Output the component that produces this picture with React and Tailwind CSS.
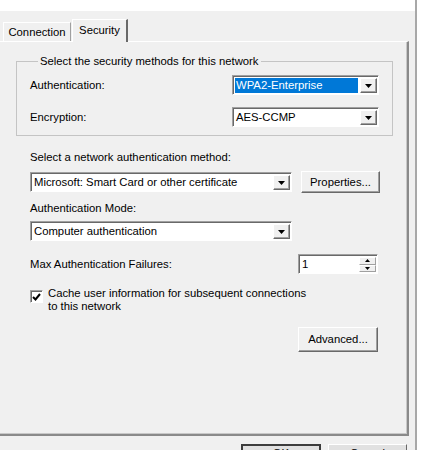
import React from "react";

// classic win32 pieces
function DropArrow() {
  return (
    <div className="w-[17px] self-stretch flex items-center justify-center bg-[#f0f0f0] border border-t-white border-l-white border-b-[#696969] border-r-[#696969] shadow-[inset_-1px_-1px_0_#a0a0a0]">
      <svg width="7" height="4" viewBox="0 0 7 4">
        <path d="M0 0h7L3.5 4z" fill="#000" />
      </svg>
    </div>
  );
}

function Combo({ value, width, selected }) {
  return (
    <div
      className={`${width} h-[20px] flex bg-white border border-t-[#a0a0a0] border-l-[#a0a0a0] border-b-white border-r-white shadow-[inset_1px_1px_0_#696969] pl-[2px] pt-[2px] pr-[1px] pb-[1px]`}
    >
      <div className="flex-1 flex items-center min-w-0">
        {selected ? (
          <span className="h-full flex-1 flex items-center bg-[#0078d7] text-white px-[1px] mr-[2px]">{value}</span>
        ) : (
          <span className="px-[1px]">{value}</span>
        )}
      </div>
      <DropArrow />
    </div>
  );
}

function Button({ children, className = "" }) {
  return (
    <button
      className={`flex items-center justify-center bg-[#f0f0f0] border border-t-white border-l-white border-b-[#696969] border-r-[#696969] shadow-[inset_-1px_-1px_0_#a0a0a0] text-black ${className}`}
    >
      {children}
    </button>
  );
}

export default function App() {
  return (
    <div className="w-[425px] h-[450px] bg-white flex overflow-hidden font-['Liberation_Sans',Arial,sans-serif] text-[11.3px] leading-[13px] text-black">
      <div className="w-[417px] flex flex-col border-r-2 border-[#a8a8a8] overflow-hidden">
        {/* title strip, cut off */}
        <div className="h-[11px] shrink-0 bg-white" />

        <div className="flex-1 shrink-0 bg-[#f0f0f0] flex flex-col">
          {/* tabs */}
          <div className="flex items-end shrink-0 pl-[3px] pt-[7px] h-[30px]">
            <div className="w-[68px] h-[19px] flex items-center justify-center border-t border-l border-white border-r border-r-[#a0a0a0] pt-[1px]">
              Connection
            </div>
            <div className="w-[56px] h-[23px] -mb-px relative z-10 bg-[#f0f0f0] flex items-start justify-center pt-[4px] border-t border-l border-white border-r-2 border-r-[#696969] ml-[1px]">
              Security
            </div>
          </div>

          {/* tab page */}
          <div className="w-[409px] h-[395px] shrink-0 border-t border-white border-r-2 border-r-[#8a8a8a] border-b-2 border-b-[#8a8a8a] shadow-[inset_-1px_-1px_0_#c8c8c8] flex flex-col">
            <fieldset className="ml-[16px] mt-[13px] w-[377px] border border-[#c4c4c4] px-[13px] pb-[8px]">
              <legend className="ml-[8px] px-[2px]">Select the security methods for this network</legend>
              <div className="flex items-center justify-between mt-[7px]">
                <span>Authentication:</span>
                <Combo value="WPA2-Enterprise" width="w-[147px]" selected />
              </div>
              <div className="flex items-center justify-between mt-[12px]">
                <span>Encryption:</span>
                <Combo value="AES-CCMP" width="w-[147px]" />
              </div>
            </fieldset>

            <div className="pl-[30px] mt-[15px]">Select a network authentication method:</div>
            <div className="flex items-center pl-[30px] mt-[7px]">
              <Combo value="Microsoft: Smart Card or other certificate" width="w-[262px]" />
              <Button className="ml-[9px] w-[79px] h-[22px]">Properties...</Button>
            </div>

            <div className="pl-[30px] mt-[9px]">Authentication Mode:</div>
            <div className="pl-[30px] mt-[6px]">
              <Combo value="Computer authentication" width="w-[262px]" />
            </div>

            <div className="flex items-center pl-[30px] pr-[29px] mt-[13px] justify-between">
              <span>Max Authentication Failures:</span>
              <div className="w-[80px] h-[20px] flex bg-white border border-t-[#a0a0a0] border-l-[#a0a0a0] border-b-white border-r-white shadow-[inset_1px_1px_0_#696969] pl-[3px] pt-[2px] pr-[1px] pb-[1px]">
                <span className="flex-1 flex items-center">1</span>
                <div className="w-[17px] flex flex-col">
                  <div className="flex-1 flex items-center justify-center bg-[#f0f0f0] border border-t-white border-l-white border-b-[#a0a0a0] border-r-[#a0a0a0]">
                    <svg width="5" height="3" viewBox="0 0 5 3"><path d="M0 3h5L2.5 0z" fill="#000" /></svg>
                  </div>
                  <div className="flex-1 flex items-center justify-center bg-[#f0f0f0] border border-t-white border-l-white border-b-[#a0a0a0] border-r-[#a0a0a0]">
                    <svg width="5" height="3" viewBox="0 0 5 3"><path d="M0 0h5L2.5 3z" fill="#000" /></svg>
                  </div>
                </div>
              </div>
            </div>

            <div className="flex items-start pl-[30px] mt-[13px]">
              <div className="w-[13px] h-[13px] mt-[3px] bg-white border border-t-[#a0a0a0] border-l-[#a0a0a0] border-b-white border-r-white shadow-[inset_1px_1px_0_#696969] flex items-center justify-center">
                <svg width="9" height="8" viewBox="0 0 9 8">
                  <path d="M1 4l2.5 2.5L8 1" stroke="#000" strokeWidth="2" fill="none" />
                </svg>
              </div>
              <div className="ml-[5px]">
                Cache user information for subsequent connections
                <br />
                to this network
              </div>
            </div>

            <div className="flex justify-end pr-[29px] mt-[14px]">
              <Button className="w-[80px] h-[25px]">Advanced...</Button>
            </div>
          </div>

          {/* dialog buttons, mostly cut off */}
          <div className="flex justify-end shrink-0 gap-[7px] pr-[8px] mt-[8px]">
            <button className="w-[80px] h-[24px] bg-[#e1e1e1] border-2 border-[#3c3c3c] flex items-start justify-center pt-[1px]">OK</button>
            <button className="w-[79px] h-[24px] bg-[#e1e1e1] border border-t-white border-l-white border-b-[#696969] border-r-[#696969] flex items-start justify-center pt-[2px]">Cancel</button>
          </div>
        </div>
      </div>
    </div>
  );
}
